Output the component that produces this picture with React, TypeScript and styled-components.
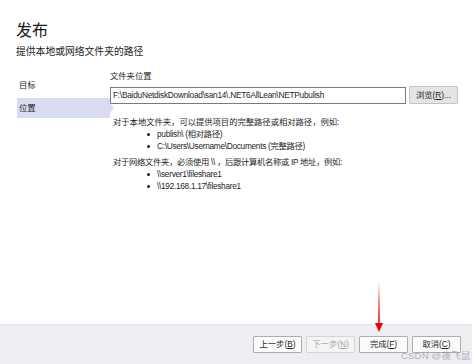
import React from 'react'
import styled, { createGlobalStyle } from 'styled-components'

const GlobalStyle = createGlobalStyle`
  html, body {
    margin: 0;
    padding: 0;
    background: #ffffff;
  }
  body {
    font-family: "Liberation Sans", "Noto Sans CJK SC", sans-serif;
    color: #1e1e1e;
  }
`

const Dialog = styled.div`
  position: relative;
  width: 474px;
  height: 364px;
  display: flex;
  flex-direction: column;
  overflow: hidden;
  background: #ffffff;
`

const Header = styled.header`
  padding: 21px 16px 0;
`

const Title = styled.h1`
  margin: 0;
  font-size: 16px;
  line-height: 20px;
  font-weight: 400;
  color: #1b1b1b;
`

const Subtitle = styled.div`
  margin-top: 4px;
  font-size: 9.8px;
  line-height: 14px;
  color: #1e1e1e;
`

const Body = styled.div`
  flex: 1;
  display: flex;
`

const Nav = styled.nav`
  width: 93px;
  padding: 16px 0 0 17px;
  display: flex;
  flex-direction: column;
  gap: 3px;
`

const NavItem = styled.div<{ $active?: boolean }>`
  position: relative;
  height: 20px;
  line-height: 20px;
  padding-left: 2px;
  font-size: 8.3px;
  color: #1e1e1e;
  background: ${(p) => (p.$active ? '#d9dcf0' : 'transparent')};

  &::after {
    content: '';
    display: ${(p) => (p.$active ? 'block' : 'none')};
    position: absolute;
    right: -4px;
    top: 5px;
    border-top: 5px solid transparent;
    border-bottom: 5px solid transparent;
    border-left: 4px solid #d9dcf0;
  }
`

const Content = styled.section`
  flex: 1;
  padding: 11px 16px 0 0;
  font-size: 8.3px;
  line-height: 12px;
`

const Label = styled.div`
  color: #1e1e1e;
`

const PathRow = styled.div`
  margin-top: 4px;
  display: flex;
  align-items: center;
  gap: 3px;
`

const PathInput = styled.input`
  box-sizing: border-box;
  width: 296px;
  height: 17px;
  margin: 0;
  padding: 0 2px;
  border: 1px solid #7a7a7a;
  border-radius: 0;
  outline: none;
  font-family: inherit;
  font-size: 8.3px;
  letter-spacing: -0.25px;
  color: #1e1e1e;
  background: #ffffff;
`

const Button = styled.button<{ $disabled?: boolean }>`
  box-sizing: border-box;
  width: 49px;
  height: 18px;
  margin: 0;
  padding: 0;
  font-family: inherit;
  font-size: 8.3px;
  line-height: 16px;
  color: ${(p) => (p.$disabled ? '#a6a6a6' : '#1e1e1e')};
  background: ${(p) => (p.$disabled ? '#f4f4f4' : '#fbfbfb')};
  border: 1px solid ${(p) => (p.$disabled ? '#d4d4d4' : '#adadad')};
  border-radius: 1px;

  u {
    text-underline-offset: 1px;
  }
`

const BrowseButton = styled(Button)`
  background: #e4e4e4;
  border-color: #c4c4c4;
`

const Note = styled.p<{ $gap?: number; $tight?: boolean }>`
  margin: ${(p) => p.$gap ?? 12}px 0 0 3px;
  letter-spacing: ${(p) => (p.$tight ? '-0.3px' : 'normal')};
`

const NoteList = styled.ul`
  margin: 0;
  padding: 0 0 0 37px;
  list-style: none;
`

const NoteItem = styled.li`
  position: relative;
  padding-left: 10px;
  letter-spacing: -0.3px;

  &::before {
    content: '';
    position: absolute;
    left: 0;
    top: 5px;
    width: 3px;
    height: 3px;
    border-radius: 50%;
    background: #1e1e1e;
  }
`

const Footer = styled.footer`
  height: 40px;
  margin-right: 2px;
  box-sizing: border-box;
  border-top: 1px solid #e6e5ea;
  background: #eeedf2;
  display: flex;
  align-items: center;
  justify-content: flex-end;
  gap: 4px;
  padding: 0 11px 0 0;
`

const FooterButton = styled(Button)`
  height: 17px;
  line-height: 15px;
`

const Pointer = styled.svg`
  position: absolute;
  left: 374px;
  top: 282px;
`

const Watermark = styled.div`
  position: absolute;
  left: 401px;
  top: 350px;
  white-space: nowrap;
  font-size: 9.5px;
  line-height: 11px;
  color: rgba(130, 130, 140, 0.6);
  letter-spacing: 0.2px;
`

function App() {
  return (
    <>
      <GlobalStyle />
      <Dialog>
        <Header>
          <Title>发布</Title>
          <Subtitle>提供本地或网络文件夹的路径</Subtitle>
        </Header>
        <Body>
          <Nav>
            <NavItem>目标</NavItem>
            <NavItem $active>位置</NavItem>
          </Nav>
          <Content>
            <Label>文件夹位置</Label>
            <PathRow>
              <PathInput readOnly value="F:\BaiduNetdiskDownload\san14\.NET6AllLean\NETPubulish" />
              <BrowseButton>
                浏览(<u>R</u>)...
              </BrowseButton>
            </PathRow>
            <Note>对于本地文件夹，可以提供项目的完整路径或相对路径，例如:</Note>
            <NoteList>
              <NoteItem>publish\ (相对路径)</NoteItem>
              <NoteItem>C:\Users\Username\Documents (完整路径)</NoteItem>
            </NoteList>
            <Note $gap={4} $tight>
              对于网络文件夹，必须使用 \\ ，后跟计算机名称或 IP 地址，例如:
            </Note>
            <NoteList>
              <NoteItem>\\server1\fileshare1</NoteItem>
              <NoteItem>\\192.168.1.17\fileshare1</NoteItem>
            </NoteList>
          </Content>
        </Body>
        <Footer>
          <FooterButton>
            上一步(<u>B</u>)
          </FooterButton>
          <FooterButton $disabled>
            下一步(<u>N</u>)
          </FooterButton>
          <FooterButton>
            完成(<u>F</u>)
          </FooterButton>
          <FooterButton>
            取消(<u>C</u>)
          </FooterButton>
        </Footer>
        <Pointer width="10" height="52" viewBox="0 0 10 52">
          <defs>
            <linearGradient id="shaft" x1="0" y1="0" x2="0" y2="1">
              <stop offset="0" stopColor="#ff3b3b" stopOpacity="0.05" />
              <stop offset="0.5" stopColor="#f02020" stopOpacity="0.7" />
              <stop offset="1" stopColor="#e60000" />
            </linearGradient>
          </defs>
          <rect x="4.2" y="0" width="1.6" height="43" fill="url(#shaft)" />
          <polygon points="1,41 9,41 5,50" fill="#e60000" />
        </Pointer>
        <Watermark>CSDN @夜飞鼠</Watermark>
      </Dialog>
    </>
  )
}

export default App
